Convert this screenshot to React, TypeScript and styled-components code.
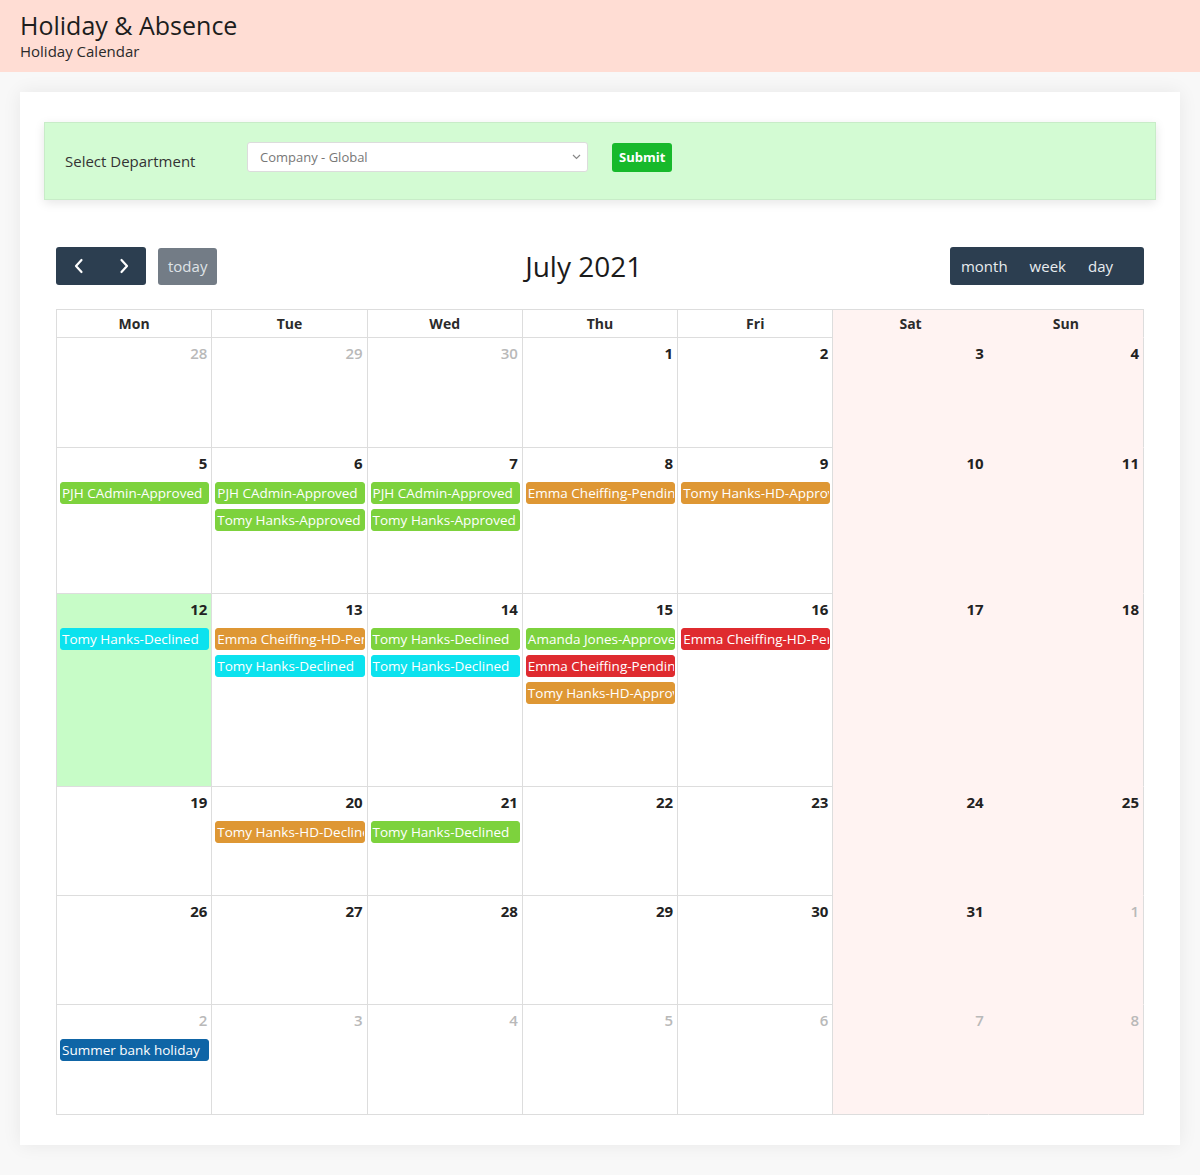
import styled, { createGlobalStyle } from 'styled-components';

const GlobalStyle = createGlobalStyle`
  * { box-sizing: border-box; }
  body {
    margin: 0;
    background: #f8f8f8;
    font-family: 'Open Sans', 'Liberation Sans', sans-serif;
    color: #212529;
  }
`;

type EventColor = 'green' | 'orange' | 'cyan' | 'red' | 'blue';

const eventColors: Record<EventColor, string> = {
  green: '#7dd23d',
  orange: '#de9734',
  cyan: '#0ce2ee',
  red: '#df2b2f',
  blue: '#0f65a6',
};

const StyledHeader = styled.header`
  background: #ffddd4;
  height: 72px;
  padding: 9px 20px 0;
`;

const StyledTitle = styled.h1`
  margin: 0;
  font-size: 25px;
  font-weight: 400;
  line-height: 32px;
  color: #1d1d1d;
`;

const StyledSubtitle = styled.p`
  margin: 0;
  font-size: 15px;
  line-height: 20px;
  color: #2a2a2a;
`;

const StyledMain = styled.main`
  padding: 20px 20px 30px;
`;

const StyledCard = styled.section`
  background: #fff;
  box-shadow: 0 0 18px rgba(0, 0, 0, 0.07);
  padding: 30px 24px 30px 24px;
`;

const StyledFilter = styled.form`
  display: flex;
  align-items: center;
  background: #d3fbd3;
  border: 1px solid #c8ecc8;
  box-shadow: 0 3px 10px rgba(0, 0, 0, 0.1);
  height: 78px;
  padding: 0 20px 0 20px;
  margin-bottom: 47px;
`;

const StyledLabel = styled.label`
  width: 182px;
  font-size: 15px;
  color: #333;
`;

const StyledSelect = styled.div`
  position: relative;
  width: 341px;
  height: 30px;
  background: #fff;
  border: 1px solid #dcdcdc;
  border-radius: 3px;
  font-size: 13px;
  color: #777;
  display: flex;
  align-items: center;
  padding-left: 12px;
  margin-top: -8px;

  svg {
    position: absolute;
    right: 6px;
    top: 11px;
  }
`;

const StyledSubmit = styled.button`
  margin-left: 24px;
  margin-top: -8px;
  height: 29px;
  padding: 0 7px;
  border: none;
  border-radius: 3px;
  background: #17b92b;
  color: #fff;
  font-family: inherit;
  font-weight: 700;
  font-size: 13px;
`;

const StyledToolbar = styled.div`
  display: flex;
  justify-content: space-between;
  align-items: center;
  padding: 0 12px;
  margin-bottom: 24px;
`;

const StyledToolbarLeft = styled.div`
  display: flex;
  gap: 12px;
  align-items: center;
`;

const StyledButtonGroup = styled.div`
  display: flex;
  align-items: center;
  background: #2c3e50;
  border-radius: 3px;
  height: 38px;
`;

const StyledNavButton = styled.button`
  width: 45px;
  height: 38px;
  border: none;
  background: transparent;
  display: flex;
  align-items: center;
  justify-content: center;
  padding: 0;
`;

const StyledTodayButton = styled.button`
  height: 37px;
  padding: 0 10px;
  border: none;
  border-radius: 3px;
  background: #737c86;
  color: #dfe3e7;
  font-family: inherit;
  font-size: 15px;
`;

const StyledMonthTitle = styled.h2`
  margin: 0;
  font-size: 28px;
  font-weight: 400;
  color: #1b1b1b;
`;

const StyledViewButton = styled.button`
  height: 38px;
  padding: 0 11px;
  border: none;
  background: transparent;
  color: #e8ecef;
  font-family: inherit;
  font-size: 15px;

  &:last-child { padding-right: 31px; }
`;

const StyledGrid = styled.div`
  margin: 0 12px;
  border-left: 1px solid #ddd;
  border-top: 1px solid #ddd;
`;

const StyledRow = styled.div<{ $height: number }>`
  display: grid;
  grid-template-columns: repeat(7, minmax(0, 1fr));
  height: ${({ $height }) => $height}px;
`;

const StyledHeadCell = styled.div<{ $weekend: boolean }>`
  background: ${({ $weekend }) => ($weekend ? '#fff3f2' : '#fff')};
  border-right: 1px solid ${({ $weekend }) => ($weekend ? '#fff3f2' : '#ddd')};
  border-bottom: 1px solid ${({ $weekend }) => ($weekend ? '#fff3f2' : '#ddd')};
  &:last-child { border-right-color: #ddd; }
  text-align: center;
  font-weight: 700;
  font-size: 14px;
  line-height: 27px;
  color: #2b2b2b;
`;

const StyledDayCell = styled.div<{ $weekend: boolean; $today: boolean; $last: boolean }>`
  min-width: 0;
  background: ${({ $weekend, $today }) => ($today ? '#c7fcc7' : $weekend ? '#fff3f2' : '#fff')};
  border-right: 1px solid ${({ $weekend }) => ($weekend ? '#fff3f2' : '#ddd')};
  border-bottom: 1px solid ${({ $weekend, $last }) => ($weekend && !$last ? '#fff3f2' : '#ddd')};
  &:last-child { border-right-color: #ddd; }
  padding: 4px 1px 0 2px;
  display: flex;
  flex-direction: column;
  gap: 5px;
`;

const StyledDayNumber = styled.span<{ $other: boolean }>`
  align-self: flex-end;
  padding-right: 3px;
  font-size: 15px;
  line-height: 22px;
  font-weight: ${({ $other }) => ($other ? 600 : 700)};
  color: ${({ $other }) => ($other ? '#b9b9b9' : '#222')};
  margin-bottom: 3px;
`;

const StyledEvent = styled.div<{ $color: EventColor }>`
  margin: 0 1px;
  height: 22px;
  line-height: 21px;
  background: ${({ $color }) => eventColors[$color]};
  border: 1px solid ${({ $color }) => eventColors[$color]};
  border-radius: 3px;
  color: #fff;
  font-size: 13.5px;
  padding: 0 1px;
  white-space: nowrap;
  overflow: hidden;
`;

type CalEvent = { title: string; color: EventColor };
type Day = { n: number; other?: boolean; today?: boolean; events?: CalEvent[] };

const weekDays = ['Mon', 'Tue', 'Wed', 'Thu', 'Fri', 'Sat', 'Sun'];

const weeks: { height: number; days: Day[] }[] = [
  {
    height: 110,
    days: [
      { n: 28, other: true },
      { n: 29, other: true },
      { n: 30, other: true },
      { n: 1 },
      { n: 2 },
      { n: 3 },
      { n: 4 },
    ],
  },
  {
    height: 146,
    days: [
      { n: 5, events: [{ title: 'PJH CAdmin-Approved', color: 'green' }] },
      {
        n: 6,
        events: [
          { title: 'PJH CAdmin-Approved', color: 'green' },
          { title: 'Tomy Hanks-Approved', color: 'green' },
        ],
      },
      {
        n: 7,
        events: [
          { title: 'PJH CAdmin-Approved', color: 'green' },
          { title: 'Tomy Hanks-Approved', color: 'green' },
        ],
      },
      { n: 8, events: [{ title: 'Emma Cheiffing-Pending', color: 'orange' }] },
      { n: 9, events: [{ title: 'Tomy Hanks-HD-Approved', color: 'orange' }] },
      { n: 10 },
      { n: 11 },
    ],
  },
  {
    height: 193,
    days: [
      { n: 12, today: true, events: [{ title: 'Tomy Hanks-Declined', color: 'cyan' }] },
      {
        n: 13,
        events: [
          { title: 'Emma Cheiffing-HD-Pending', color: 'orange' },
          { title: 'Tomy Hanks-Declined', color: 'cyan' },
        ],
      },
      {
        n: 14,
        events: [
          { title: 'Tomy Hanks-Declined', color: 'green' },
          { title: 'Tomy Hanks-Declined', color: 'cyan' },
        ],
      },
      {
        n: 15,
        events: [
          { title: 'Amanda Jones-Approved', color: 'green' },
          { title: 'Emma Cheiffing-Pending', color: 'red' },
          { title: 'Tomy Hanks-HD-Approved', color: 'orange' },
        ],
      },
      { n: 16, events: [{ title: 'Emma Cheiffing-HD-Pending', color: 'red' }] },
      { n: 17 },
      { n: 18 },
    ],
  },
  {
    height: 109,
    days: [
      { n: 19 },
      { n: 20, events: [{ title: 'Tomy Hanks-HD-Declined', color: 'orange' }] },
      { n: 21, events: [{ title: 'Tomy Hanks-Declined', color: 'green' }] },
      { n: 22 },
      { n: 23 },
      { n: 24 },
      { n: 25 },
    ],
  },
  {
    height: 109,
    days: [
      { n: 26 },
      { n: 27 },
      { n: 28 },
      { n: 29 },
      { n: 30 },
      { n: 31 },
      { n: 1, other: true },
    ],
  },
  {
    height: 110,
    days: [
      { n: 2, other: true, events: [{ title: 'Summer bank holiday', color: 'blue' }] },
      { n: 3, other: true },
      { n: 4, other: true },
      { n: 5, other: true },
      { n: 6, other: true },
      { n: 7, other: true },
      { n: 8, other: true },
    ],
  },
];

const Chevron = ({ dir }: { dir: 'left' | 'right' }) => (
  <svg width="12" height="16" viewBox="0 0 12 16" fill="none">
    <path
      d={dir === 'left' ? 'M8.5 2 L3 8 L8.5 14' : 'M3.5 2 L9 8 L3.5 14'}
      stroke="#fff"
      strokeWidth="2.2"
      strokeLinecap="round"
      strokeLinejoin="round"
    />
  </svg>
);

const App = () => (
  <>
    <GlobalStyle />
    <StyledHeader>
      <StyledTitle>Holiday &amp; Absence</StyledTitle>
      <StyledSubtitle>Holiday Calendar</StyledSubtitle>
    </StyledHeader>
    <StyledMain>
      <StyledCard>
        <StyledFilter>
          <StyledLabel>Select Department</StyledLabel>
          <StyledSelect>
            Company - Global
            <svg width="9" height="6" viewBox="0 0 9 6" fill="none">
              <path d="M1 1 L4.5 4.5 L8 1" stroke="#888" strokeWidth="1.2" />
            </svg>
          </StyledSelect>
          <StyledSubmit type="button">Submit</StyledSubmit>
        </StyledFilter>

        <StyledToolbar>
          <StyledToolbarLeft>
            <StyledButtonGroup>
              <StyledNavButton type="button" aria-label="prev">
                <Chevron dir="left" />
              </StyledNavButton>
              <StyledNavButton type="button" aria-label="next">
                <Chevron dir="right" />
              </StyledNavButton>
            </StyledButtonGroup>
            <StyledTodayButton type="button">today</StyledTodayButton>
          </StyledToolbarLeft>
          <StyledMonthTitle>July 2021</StyledMonthTitle>
          <StyledButtonGroup>
            <StyledViewButton type="button">month</StyledViewButton>
            <StyledViewButton type="button">week</StyledViewButton>
            <StyledViewButton type="button">day</StyledViewButton>
          </StyledButtonGroup>
        </StyledToolbar>

        <StyledGrid>
          <StyledRow $height={28}>
            {weekDays.map((d, i) => (
              <StyledHeadCell key={d} $weekend={i >= 5}>
                {d}
              </StyledHeadCell>
            ))}
          </StyledRow>
          {weeks.map((week, wi) => (
            <StyledRow key={wi} $height={week.height}>
              {week.days.map((day, di) => (
                <StyledDayCell
                  key={di}
                  $weekend={di >= 5}
                  $today={!!day.today}
                  $last={wi === weeks.length - 1}
                >
                  <StyledDayNumber $other={!!day.other}>{day.n}</StyledDayNumber>
                  {day.events?.map((ev, ei) => (
                    <StyledEvent key={ei} $color={ev.color}>
                      {ev.title}
                    </StyledEvent>
                  ))}
                </StyledDayCell>
              ))}
            </StyledRow>
          ))}
        </StyledGrid>
      </StyledCard>
    </StyledMain>
  </>
);

export default App;
